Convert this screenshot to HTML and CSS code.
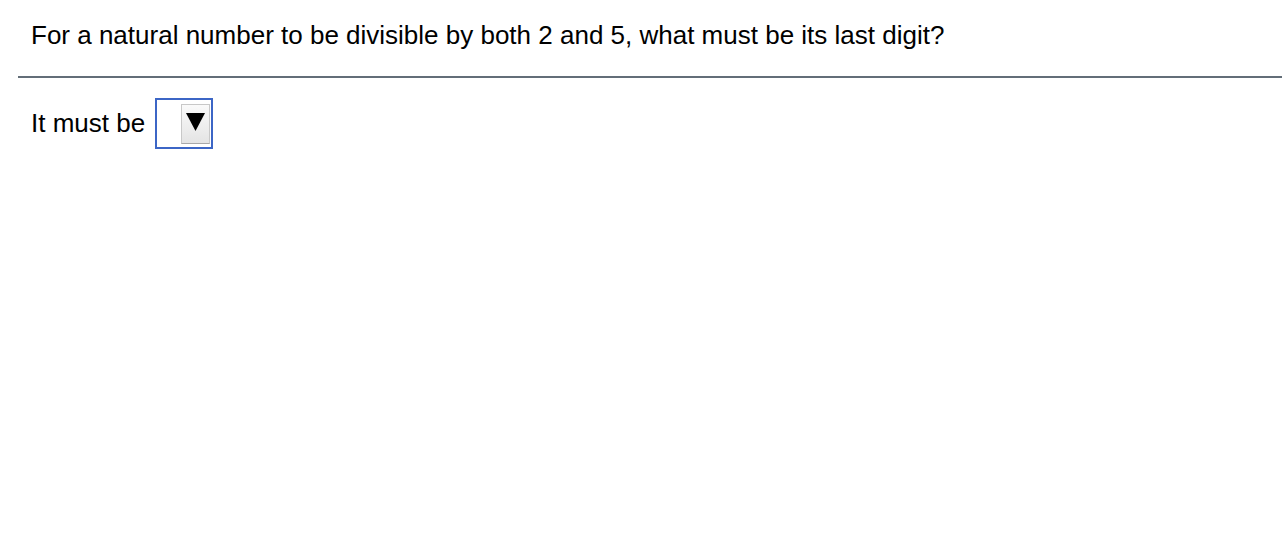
FILE: index.html
```html
<!DOCTYPE html>
<html lang="en">
<head>
  <meta charset="UTF-8">
  <title>Question</title>
  <link rel="stylesheet" href="styles.css">
</head>
<body>

  <div class="question">
    For a natural number to be divisible by both 2 and 5, what must be its last digit?
  </div>

  <div class="answer">
    <span class="answer-label">It must be</span>
    <span class="dropdown">
      <span class="dropdown-value"></span>
      <span class="dropdown-button">
        <svg width="19" height="18" viewBox="0 0 19 18">
          <polygon points="0,0 19,0 9.5,18" fill="#000"/>
        </svg>
      </span>
    </span>
  </div>

</body>
</html>
```

FILE: styles.css
```css
body {
  margin: 0;
  font-family: "Liberation Sans", Arial, sans-serif;
  color: #000;
  background: #fff;
}

/* question text with the rule underneath */
.question {
  font-size: 26px;
  line-height: 30px;
  margin-left: 18px;
  padding: 20px 0 0 13px;
  height: 78px;
  box-sizing: border-box;
  border-bottom: 2px solid #636e78;
}

.answer {
  display: flex;
  align-items: center;
  padding: 20px 0 0 31px;
  font-size: 26px;
  line-height: 30px;
}

.answer-label {
  margin-right: 10px;
  margin-bottom: 2px;
}

.dropdown {
  display: flex;
  align-items: center;
  width: 58px;
  height: 51px;
  box-sizing: border-box;
  border: 2px solid #3c66c6;
  padding: 4px 1px 4px 0;
}

.dropdown-value {
  flex: 1;
}

.dropdown-button {
  width: 29px;
  height: 40px;
  box-sizing: border-box;
  display: flex;
  justify-content: center;
  align-items: center;
  padding-bottom: 4px;
  border: 1px solid #c8c8c8;
  border-bottom-color: #a8a8a8;
  background: linear-gradient(#fafafa, #e4e4e4);
}
```
